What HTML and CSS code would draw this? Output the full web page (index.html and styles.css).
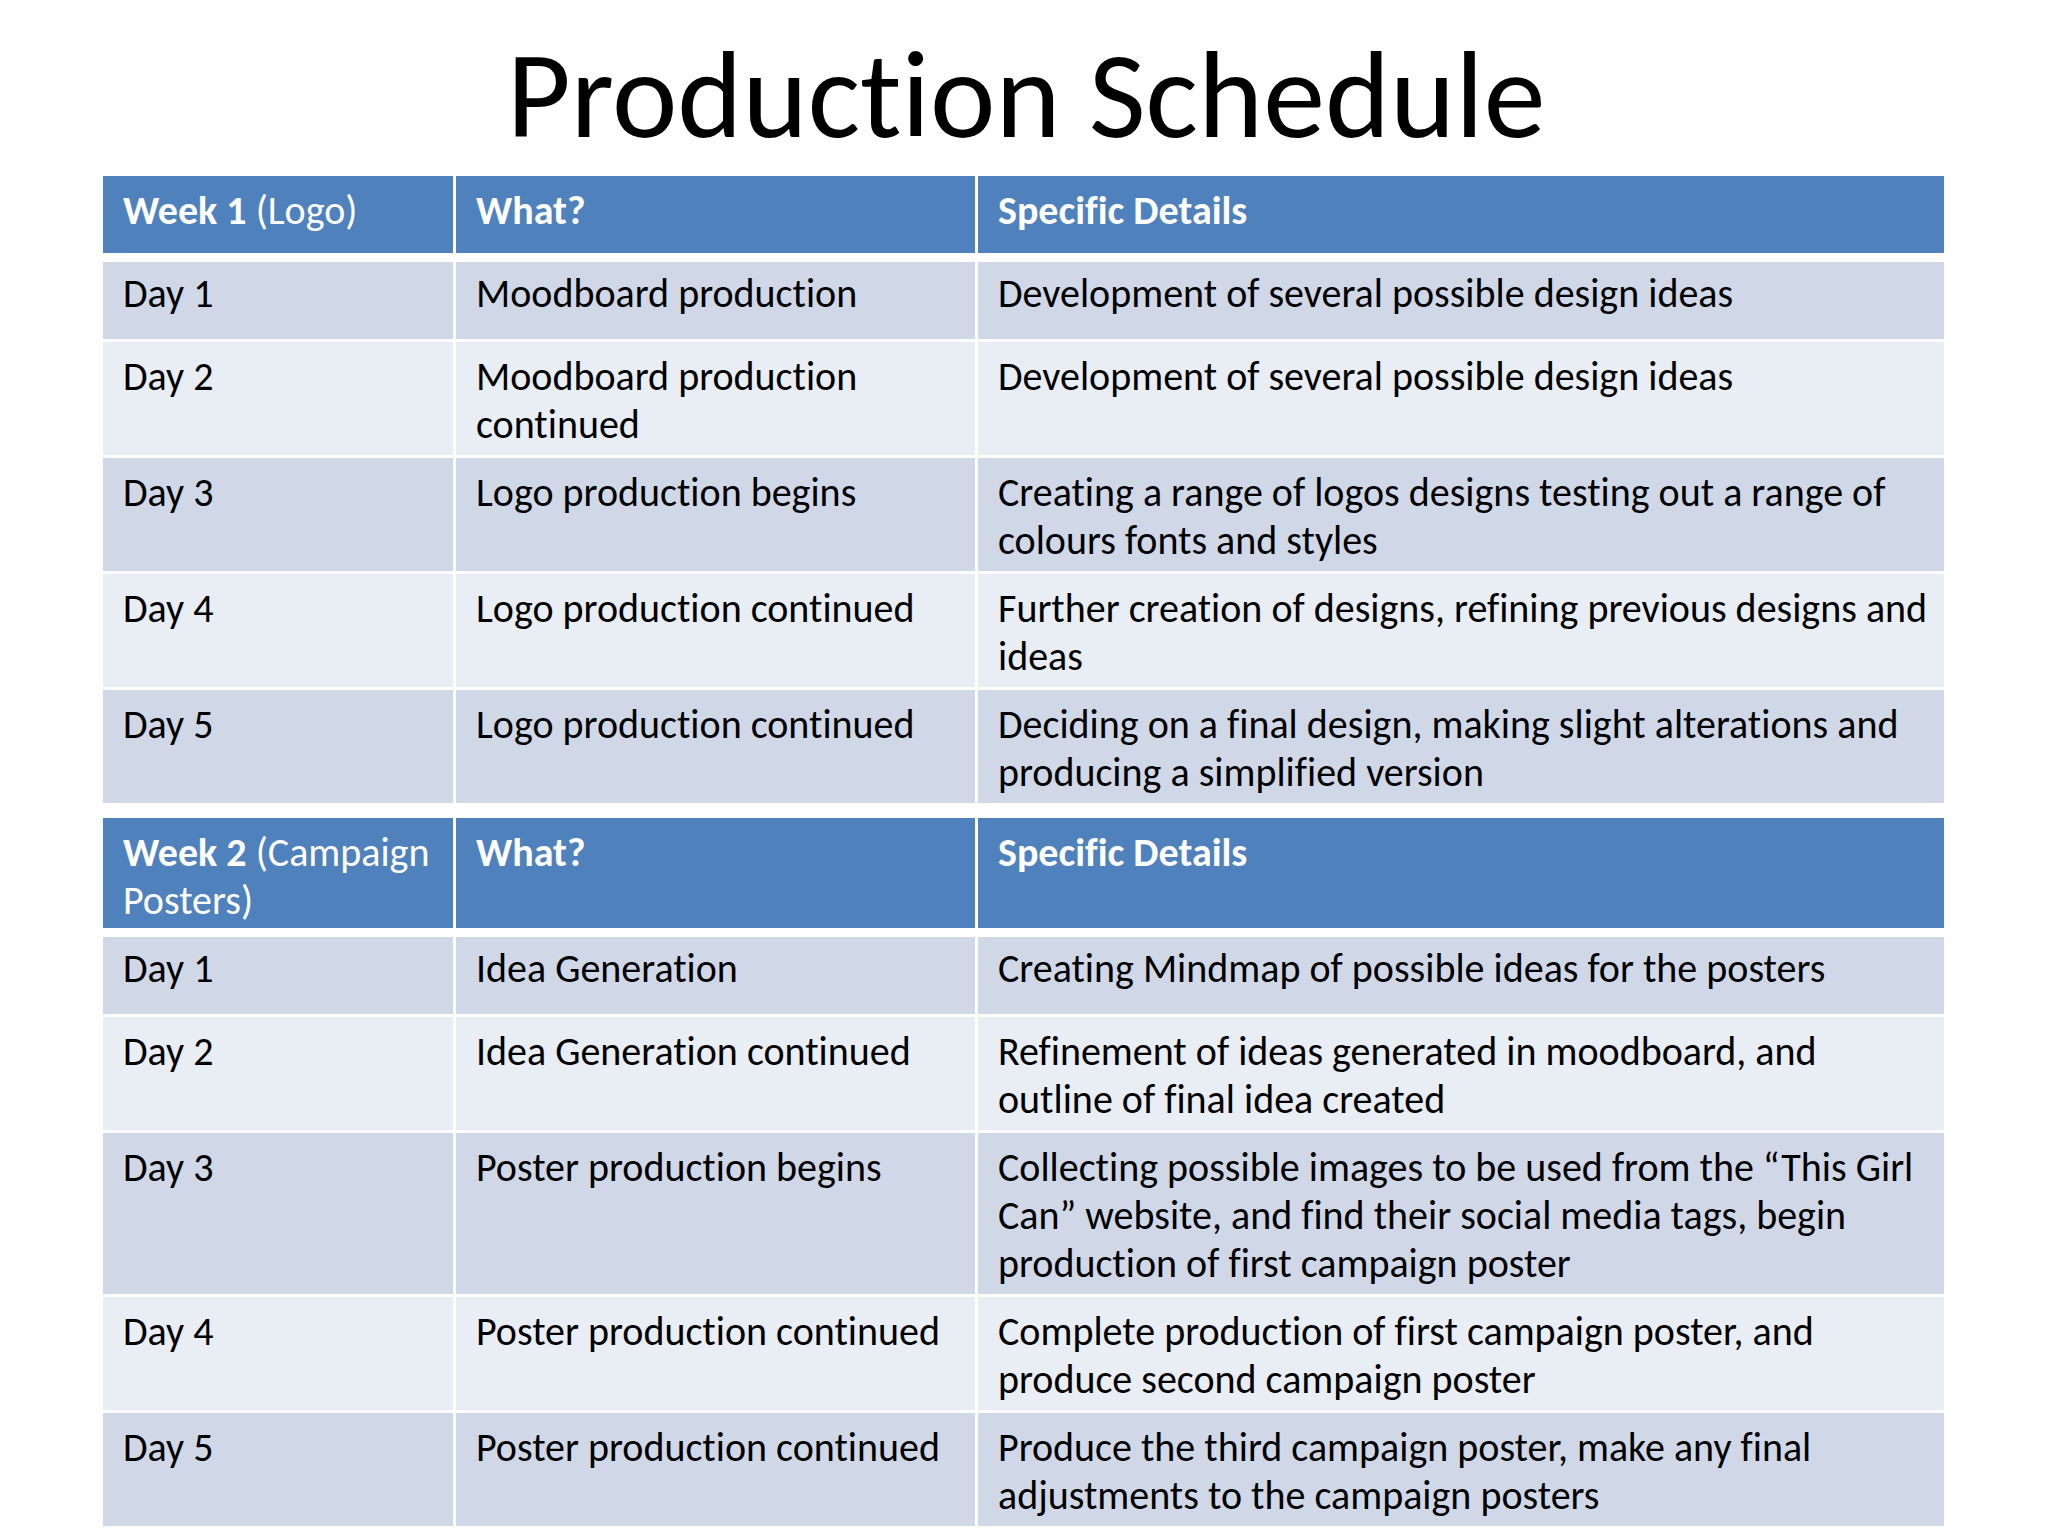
FILE: index.html
```html
<!DOCTYPE html>
<html lang="en">
<head>
<meta charset="utf-8">
<title>Production Schedule</title>
<link rel="stylesheet" href="styles.css">
</head>
<body>
<main class="slide">
  <h1 class="title">Production Schedule</h1>

  <section class="sched">
    <div class="cell head"><b>Week 1</b> (Logo)</div>
    <div class="cell head"><b>What?</b></div>
    <div class="cell head"><b>Specific Details</b></div>

    <div class="cell odd single">Day 1</div>
    <div class="cell odd single">Moodboard production</div>
    <div class="cell odd single">Development of several possible design ideas</div>

    <div class="cell even">Day 2</div>
    <div class="cell even">Moodboard production<br>continued</div>
    <div class="cell even">Development of several possible design ideas</div>

    <div class="cell odd">Day 3</div>
    <div class="cell odd">Logo production begins</div>
    <div class="cell odd">Creating a range of logos designs testing out a range of<br>colours fonts and styles</div>

    <div class="cell even">Day 4</div>
    <div class="cell even">Logo production continued</div>
    <div class="cell even">Further creation of designs, refining previous designs and<br>ideas</div>

    <div class="cell odd">Day 5</div>
    <div class="cell odd">Logo production continued</div>
    <div class="cell odd">Deciding on a final design, making slight alterations and<br>producing a simplified version</div>
  </section>

  <section class="sched second">
    <div class="cell head"><b>Week 2</b> (Campaign<br>Posters)</div>
    <div class="cell head"><b>What?</b></div>
    <div class="cell head"><b>Specific Details</b></div>

    <div class="cell odd single">Day 1</div>
    <div class="cell odd single">Idea Generation</div>
    <div class="cell odd single">Creating Mindmap of possible ideas for the posters</div>

    <div class="cell even">Day 2</div>
    <div class="cell even">Idea Generation continued</div>
    <div class="cell even">Refinement of ideas generated in moodboard, and<br>outline of final idea created</div>

    <div class="cell odd">Day 3</div>
    <div class="cell odd">Poster production begins</div>
    <div class="cell odd">Collecting possible images to be used from the “This Girl<br>Can” website, and find their social media tags, begin<br>production of first campaign poster</div>

    <div class="cell even">Day 4</div>
    <div class="cell even">Poster production continued</div>
    <div class="cell even">Complete production of first campaign poster, and<br>produce second campaign poster</div>

    <div class="cell odd">Day 5</div>
    <div class="cell odd">Poster production continued</div>
    <div class="cell odd">Produce the third campaign poster, make any final<br>adjustments to the campaign posters</div>
  </section>
</main>
</body>
</html>
```
FILE: styles.css
```css
html, body {
  margin: 0;
  padding: 0;
  background: #ffffff;
}

body {
  font-family: "Carlito", "Calibri", "Lato", sans-serif;
  font-variant-ligatures: none;
  font-feature-settings: "liga" 0, "clig" 0;
  color: #000000;
}

.slide {
  width: 2048px;
  height: 1536px;
  overflow: hidden;
}

.title {
  margin: 0;
  box-sizing: border-box;
  height: 176px;
  padding: 20px 0 0 4px;
  font-size: 124px;
  line-height: 149px;
  font-weight: normal;
  text-align: center;
  color: #000000;
}

.sched {
  display: grid;
  grid-template-columns: 350px 519px 966px;
  column-gap: 3px;
  row-gap: 3px;
  margin-left: 103px;
  width: 1841px;
}

.sched.second {
  margin-top: 15px;
}

.cell {
  box-sizing: border-box;
  min-height: 77px;
  padding: 11px 10px 6px 20px;
  font-size: 40px;
  line-height: 48px;
  white-space: nowrap;
}

.cell.single {
  padding-top: 8px;
}

.cell b {
  font-weight: bold;
}

.head {
  background: #4f81bd;
  color: #ffffff;
  margin-bottom: 6px;
  padding-bottom: 3px;
}

.odd {
  background: #d0d8e8;
}

.even {
  background: #e9edf4;
}
```
